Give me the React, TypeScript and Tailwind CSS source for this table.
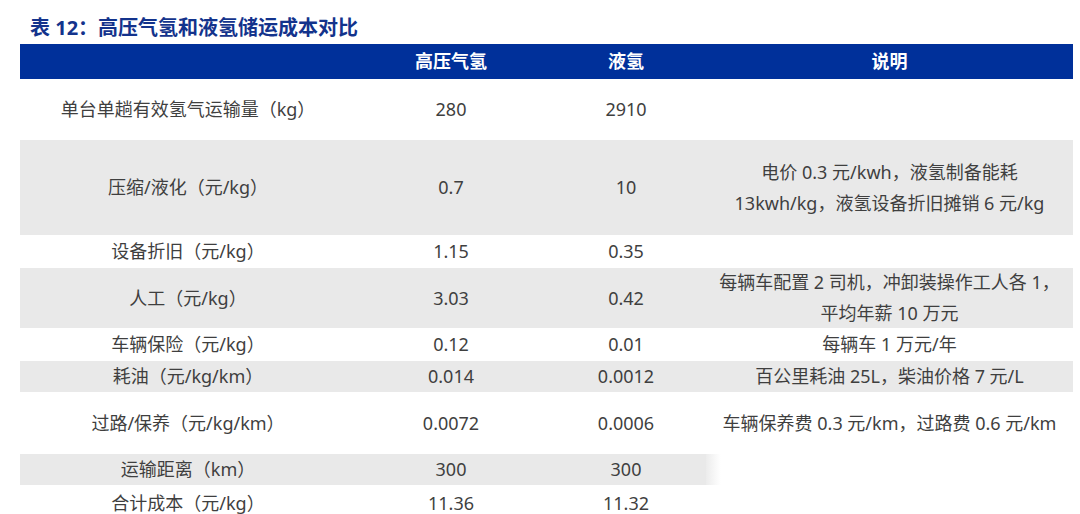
const rows = [
  { label: "单台单趟有效氢气运输量（kg）", gas: "280", liquid: "2910", note: [], h: "h-[61px]", gray: false },
  { label: "压缩/液化（元/kg）", gas: "0.7", liquid: "10", note: ["电价 0.3 元/kwh，液氢制备能耗", "13kwh/kg，液氢设备折旧摊销 6 元/kg"], h: "h-[95px]", gray: true },
  { label: "设备折旧（元/kg）", gas: "1.15", liquid: "0.35", note: [], h: "h-[33px]", gray: false },
  { label: "人工（元/kg）", gas: "3.03", liquid: "0.42", note: ["每辆车配置 2 司机，冲卸装操作工人各 1，", "平均年薪 10 万元"], h: "h-[60px]", gray: true },
  { label: "车辆保险（元/kg）", gas: "0.12", liquid: "0.01", note: ["每辆车 1 万元/年"], h: "h-[33px]", gray: false },
  { label: "耗油（元/kg/km）", gas: "0.014", liquid: "0.0012", note: ["百公里耗油 25L，柴油价格 7 元/L"], h: "h-[31px]", gray: true },
  { label: "过路/保养（元/kg/km）", gas: "0.0072", liquid: "0.0006", note: ["车辆保养费 0.3 元/km，过路费 0.6 元/km"], h: "h-[62px]", gray: false },
  { label: "运输距离（km）", gas: "300", liquid: "300", note: [], h: "h-[31px]", gray: true, fade: true },
  { label: "合计成本（元/kg）", gas: "11.36", liquid: "11.32", note: [], h: "h-[36px]", gray: false },
];

type Row = (typeof rows)[number] & { fade?: boolean };

const Cell = ({ children, className }: { children: React.ReactNode; className?: string }) => (
  <div className={`flex flex-col items-center justify-center text-center whitespace-nowrap ${className ?? ""}`}>{children}</div>
);

const App = () => {
  return (
    <div
      className="w-[1080px] h-[514px] overflow-hidden bg-white text-[#3f3f3f]"
      style={{ fontFamily: '"Noto Sans", "Noto Sans CJK SC", sans-serif' }}
    >
      <div className="h-[44px] pl-[30px] pt-[13px]">
        <h1 className="text-[20px] leading-[30px] font-bold text-[#13338c]">表 12：高压气氢和液氢储运成本对比</h1>
      </div>

      <div className="ml-[20px] w-[1053px] grid grid-cols-[336px_190px_160px_367px] text-[18px] leading-[31px]">
        {/* header */}
        <div className="h-[35px] bg-[#00309a]" />
        <Cell className="h-[35px] bg-[#00309a] text-white font-bold">高压气氢</Cell>
        <Cell className="h-[35px] bg-[#00309a] text-white font-bold">液氢</Cell>
        <Cell className="h-[35px] bg-[#00309a] text-white font-bold">说明</Cell>

        {rows.map((r: Row, i) => {
          const bg = r.gray ? "bg-[#e9e9e9]" : "bg-white";
          return [
            <Cell key={`a${i}`} className={`${r.h} ${bg}`}>{r.label}</Cell>,
            <Cell key={`b${i}`} className={`${r.h} ${bg}`}>{r.gas}</Cell>,
            <Cell key={`c${i}`} className={`${r.h} ${bg}`}>{r.liquid}</Cell>,
            <Cell
              key={`d${i}`}
              className={`${r.h} ${r.fade ? "bg-gradient-to-r from-[#ececec] via-white via-[4%] to-white" : bg}`}
            >
              {r.note.map((line, j) => (
                <span key={j}>{line}</span>
              ))}
            </Cell>,
          ];
        })}
      </div>
    </div>
  );
};

export default App;
